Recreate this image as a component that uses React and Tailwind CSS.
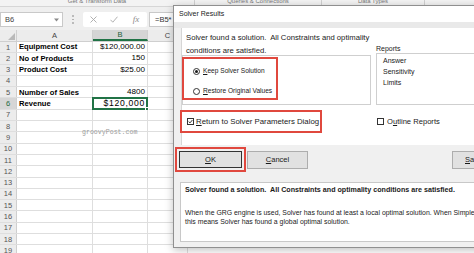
const rows = Array.from({ length: 19 }, (_, i) => i + 1);
const data = {
  1: ['Equipment Cost', '$120,000.00'],
  2: ['No of Products', '150'],
  3: ['Product Cost', '$25.00'],
  5: ['Number of Sales', '4800'],
  6: ['Revenue', '$120,000'],
};

function Radio({ checked }) {
  return (
    <span className="w-[7px] h-[7px] rounded-full border border-[#333] bg-white flex items-center justify-center shrink-0">
      {checked && <span className="w-[3px] h-[3px] rounded-full bg-[#1a1a1a]" />}
    </span>
  );
}

function Check({ checked }) {
  return (
    <span className="w-[7px] h-[7px] border border-[#333] bg-white flex items-center justify-center shrink-0">
      {checked && (
        <svg width="5" height="5" viewBox="0 0 5 5">
          <path d="M0.6 2.5 L2 3.9 L4.4 1" fill="none" stroke="#222" strokeWidth="0.9" />
        </svg>
      )}
    </span>
  );
}

export default function App() {
  return (
    <div className="relative w-[474px] h-[253px] overflow-hidden bg-white font-['Liberation_Sans',Arial,sans-serif]">
      {/* ribbon strip */}
      <div className="h-[7px] bg-[#f3f3f3] border-b border-[#d6d6d6] grid grid-cols-[195px_127px_103px_1fr] overflow-hidden">
        <div className="border-r border-[#d0d0d0] text-center text-[6px] leading-[6px] -mt-[2px] text-[#777] whitespace-nowrap">Get &amp; Transform Data</div>
        <div className="border-r border-[#d0d0d0] text-center text-[6px] leading-[6px] -mt-[2px] text-[#777] whitespace-nowrap">Queries &amp; Connections</div>
        <div className="border-r border-[#d0d0d0] text-center text-[6px] leading-[6px] -mt-[2px] text-[#777] whitespace-nowrap">Data Types</div>
        <div />
      </div>

      {/* formula bar */}
      <div className="h-[23px] bg-[#efefef] flex items-start pt-[5px]">
        <div className="w-[63px] shrink-0 h-[15px] bg-white border border-[#c9c9c9] flex items-center justify-between pl-[4px] pr-[3px]">
          <span className="text-[7.5px] text-[#444]">B6</span>
          <svg width="5" height="4" viewBox="0 0 5 4"><path d="M0 0.5 L5 0.5 L2.5 3.5 Z" fill="#8a8a8a" /></svg>
        </div>
        <div className="w-[20px] shrink-0 h-[15px] flex flex-col items-center justify-center gap-[2px]">
          <span className="w-[1.5px] h-[1.5px] rounded-full bg-[#aaa]" />
          <span className="w-[1.5px] h-[1.5px] rounded-full bg-[#aaa]" />
          <span className="w-[1.5px] h-[1.5px] rounded-full bg-[#aaa]" />
        </div>
        <div className="w-[64px] shrink-0 h-[15px] bg-white rounded-[2px] flex items-center">
          <div className="w-[20px] flex justify-center">
            <svg width="7" height="7" viewBox="0 0 7 7"><path d="M0.5 0.5 L6.5 6.5 M6.5 0.5 L0.5 6.5" stroke="#a8a8a8" strokeWidth="0.9" /></svg>
          </div>
          <div className="w-[22px] flex justify-center">
            <svg width="8" height="7" viewBox="0 0 8 7"><path d="M0.5 3.8 L2.8 6.2 L7.5 0.7" fill="none" stroke="#a8a8a8" strokeWidth="0.9" /></svg>
          </div>
          <div className="w-[22px] flex justify-center font-['Liberation_Serif',serif] italic text-[9px] leading-none text-[#8a8a8a]">fx</div>
        </div>
        <div className="ml-[2px] flex-1 h-[15px] bg-white border border-[#c9c9c9] flex items-center pl-[5px] text-[7.5px] text-[#333]">=B5*</div>
      </div>

      {/* column headers */}
      <div className="h-[12px] flex bg-[#ececec] border-b border-[#cfcfcf] text-[7.5px] text-[#444]">
        <div className="w-[17px] shrink-0 border-r border-[#cfcfcf] flex items-end justify-end pr-[1px] pb-[1px]">
          <svg width="7" height="7" viewBox="0 0 7 7"><path d="M7 0 L7 7 L0 7 Z" fill="#b9b9b9" /></svg>
        </div>
        <div className="w-[76px] shrink-0 border-r border-[#cfcfcf] flex items-center justify-center">A</div>
        <div className="w-[55px] shrink-0 border-r border-[#cfcfcf] bg-[#d5d5d5] border-b-2 border-b-[#217346] flex items-center justify-center text-[#1d5e38]">B</div>
        <div className="w-[40px] shrink-0 border-r border-[#cfcfcf] flex items-center justify-center">C</div>
        <div className="flex-1" />
      </div>

      {/* rows */}
      {rows.map((r) => {
        const d = data[r];
        const sel = r === 6;
        return (
          <div key={r} className="flex h-[11.31px] border-b border-[#dedede]">
            <div className={sel ? 'w-[17px] shrink-0 border-r border-[#cfcfcf] bg-[#d6d6d6] text-[#1d6b40] flex items-center justify-center text-[7.5px]' : 'w-[17px] shrink-0 border-r border-[#cfcfcf] bg-[#ececec] text-[#555] flex items-center justify-center text-[7.5px]'}>{r}</div>
            <div className="w-[76px] shrink-0 border-r border-[#dedede] pl-[2px] flex items-center font-bold text-[7.6px] text-black whitespace-nowrap">{d ? d[0] : ''}</div>
            <div className={sel ? 'relative w-[55px] shrink-0 border-r border-[#dedede] pr-[2px] flex items-center justify-end text-[8.6px] tracking-[0.7px] text-black whitespace-nowrap' : 'relative w-[55px] shrink-0 border-r border-[#dedede] pr-[2px] flex items-center justify-end text-[8.1px] text-black whitespace-nowrap'}>
              {d ? d[1] : ''}
              {sel && (
                <div className="absolute -top-[1px] -left-[1px] -right-[1px] -bottom-[1px] border-2 border-[#217346]">
                  <div className="absolute -right-[3px] -bottom-[3px] w-[4px] h-[4px] bg-[#217346] border border-white" />
                </div>
              )}
            </div>
            <div className="w-[40px] shrink-0 border-r border-[#dedede]" />
            <div className="flex-1" />
          </div>
        );
      })}

      {/* watermark */}
      <div className="absolute left-[82px] top-[129px] font-['Liberation_Mono',monospace] text-[6.6px] leading-[8px] text-[#9c9c9c]">groovyPost.com</div>

      {/* Solver Results dialog */}
      <div className="absolute left-[173px] top-[5px] w-[330px] h-[243px] bg-[#f0f0f0] border border-[#8f8f8f] shadow-[0_2px_8px_rgba(0,0,0,0.25)] flex flex-col text-[#1a1a1a]">
        <div className="h-[16px] shrink-0 bg-white pl-[5px] text-[7px] leading-[16px] text-[#222]">Solver Results</div>
        <div className="h-[6px] shrink-0 bg-[#e9e9e9]" />

        {/* top panel */}
        <div className="ml-[7px] h-[117px] shrink-0 bg-white border-l border-[#d6d6d6] flex">
          {/* left column */}
          <div className="w-[189px] shrink-0 flex flex-col">
            <div className="h-[27px] shrink-0 pl-[4px] pt-[4px] text-[7.7px] leading-[12.6px] whitespace-nowrap">
              Solver found a solution.&nbsp; All Constraints and optimality<br />conditions are satisfied.
            </div>
            <div className="h-[50px] shrink-0 border border-[#cfcfcf]">
              <div className="mt-[1px] -ml-[1px] w-[96px] h-[43px] border-2 border-[#e0483e] pl-[9px] pt-[7px] flex flex-col gap-[10px]">
                <div className="h-[10px] flex items-center gap-[3px] text-[6.6px] whitespace-nowrap">
                  <Radio checked />
                  <span><span className="underline">K</span>eep Solver Solution</span>
                </div>
                <div className="h-[10px] flex items-center gap-[3px] text-[6.6px] whitespace-nowrap">
                  <Radio />
                  <span><span className="underline">R</span>estore Original Values</span>
                </div>
              </div>
            </div>
            <div className="mt-[5px] -ml-[2px] w-[142px] h-[23px] shrink-0 border-2 border-[#e0483e] pl-[5px] flex items-center gap-[2px] text-[7.8px] whitespace-nowrap overflow-hidden">
              <Check checked />
              <span><span className="underline">R</span>eturn to Solver Parameters Dialog</span>
            </div>
          </div>
          {/* right column */}
          <div className="flex-1 pl-[5px] pt-[18px] flex flex-col">
            <div className="h-[7px] shrink-0 text-[7px] leading-[7px] -mt-[1px]">Reports</div>
            <div className="mt-[1px] h-[52px] shrink-0 border border-[#cfcfcf] pl-[6px] pt-[1px] text-[7px] leading-[11px]">
              <div>Answer</div>
              <div>Sensitivity</div>
              <div>Limits</div>
            </div>
            <div className="mt-[5px] h-[23px] shrink-0 flex items-center gap-[3px] pl-[1px] text-[7.6px] whitespace-nowrap">
              <Check />
              <span>O<span className="underline">u</span>tline Reports</span>
            </div>
          </div>
        </div>

        {/* buttons */}
        <div className="h-[37px] shrink-0 flex items-start text-[7.5px]">
          <div className="ml-[1px] mt-[2px] w-[71px] h-[25px] shrink-0 border-2 border-[#e0483e] p-[2px]">
            <div className="h-[17px] bg-[#e1e1e1] border border-[#333] flex items-center justify-center">
              <span><span className="underline">O</span>K</span>
            </div>
          </div>
          <div className="ml-[1px] mt-[6px] w-[61px] h-[18px] shrink-0 bg-[#e1e1e1] border border-[#adadad] flex items-center justify-center">
            <span><span className="underline">C</span>ancel</span>
          </div>
          <div className="ml-[144px] mt-[6px] w-[80px] h-[18px] shrink-0 bg-[#e1e1e1] border border-[#adadad] flex items-center pl-[12px] whitespace-nowrap">
            <span><span className="underline">S</span>ave Scenario...</span>
          </div>
        </div>

        {/* message box */}
        <div className="ml-[6px] mr-[6px] h-[60px] shrink-0 bg-white border border-[#c8c8c8] pl-[4px] pt-[3px] whitespace-nowrap overflow-hidden">
          <div className="font-bold text-[7.15px] leading-[9px]">Solver found a solution.&nbsp; All Constraints and optimality conditions are satisfied.</div>
          <div className="mt-[13px] text-[6.9px] leading-[9.3px] text-[#222]">
            When the GRG engine is used, Solver has found at least a local optimal solution. When Simplex LP is used,<br />
            this means Solver has found a global optimal solution.
          </div>
        </div>
      </div>
    </div>
  );
}
